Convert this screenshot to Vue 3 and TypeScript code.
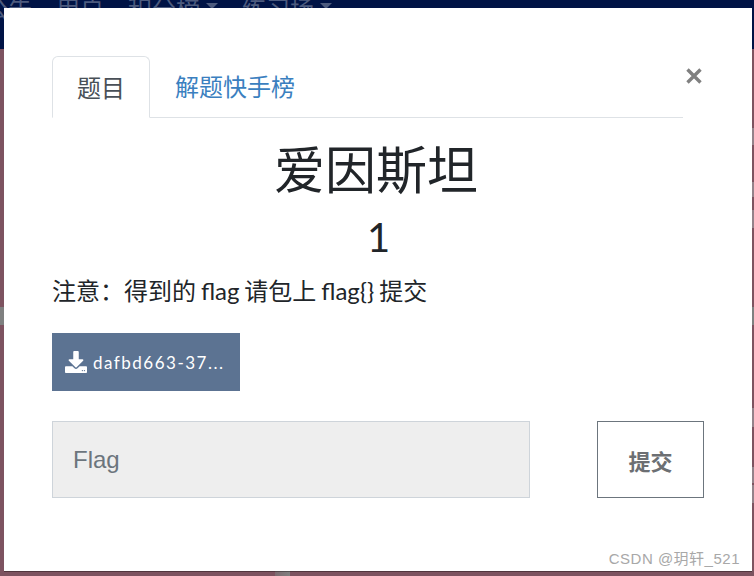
<script setup lang="ts">
const navItems = [
  { label: '公告', caret: false },
  { label: '用户', caret: false },
  { label: '积分榜', caret: true },
  { label: '练习场', caret: true },
]
</script>

<template>
  <div class="page">
    <div class="nav">
      <span v-for="item in navItems" :key="item.label" class="nav-item">
        {{ item.label }}<i v-if="item.caret" class="caret"></i>
      </span>
    </div>
    <div class="band"></div>
    <div class="strip"></div>
    <div class="patch"></div>
    <div class="modal">
      <div class="tab-row">
        <div class="tabs">
          <div class="tab active">题目</div>
          <div class="tab link">解题快手榜</div>
        </div>
        <svg class="close" viewBox="0 0 18 18" width="18" height="18" aria-label="关闭">
          <path d="M2.5 2.5 L15.5 15.5 M15.5 2.5 L2.5 15.5" stroke="#808080" stroke-width="3.4" fill="none" />
        </svg>
      </div>
      <h2 class="title">爱因斯坦</h2>
      <div class="points">1</div>
      <p class="note">注意：得到的 flag 请包上 flag{} 提交</p>
      <button class="file">
        <svg viewBox="0 0 512 512" width="22" height="22" class="dl">
          <path fill="#fff" d="M216 0h80c13 0 24 11 24 24v168h88c18 0 27 22 14 34L270 378c-7 8-21 8-28 0L90 226c-13-12-4-34 14-34h88V24c0-13 11-24 24-24z" />
          <path fill="#fff" d="M512 376v112c0 13-11 24-24 24H24c-13 0-24-11-24-24V376c0-13 11-24 24-24h147l49 49c20 20 52 20 72 0l49-49h147c13 0 24 11 24 24z" />
          <circle cx="404" cy="456" r="16" fill="#5c7392" /><circle cx="452" cy="456" r="16" fill="#5c7392" />
        </svg>
        <span class="file-name">dafbd663-37...</span>
      </button>
      <div class="submit-row">
        <input class="flag" placeholder="Flag" />
        <button class="submit">提交</button>
      </div>
      <div class="mark">CSDN @玥轩_521</div>
    </div>
  </div>
</template>

<style>
html, body { margin: 0; padding: 0; }
</style>

<style scoped>
.page {
  position: relative;
  width: 754px;
  height: 576px;
  overflow: hidden;
  background: #7d5360;
  font-family: Lato, "Noto Sans CJK SC", sans-serif;
}
.nav {
  height: 49px;
  background: #001345;
  display: flex;
  align-items: flex-start;
  gap: 24px;
  box-sizing: border-box;
  overflow: hidden;
}
.nav-item {
  display: flex;
  flex: none;
  color: #4d5b7e;
  font-size: 24px;
  line-height: 24px;
  margin-top: -4px;
  font-family: "Noto Sans CJK SC", sans-serif;
}
.nav-item:first-child { margin-left: -16px; }
.caret {
  width: 0;
  height: 0;
  margin: 7px 0 0 6px;
  border-left: 6.5px solid transparent;
  border-right: 6.5px solid transparent;
  border-top: 6.5px solid #4d5b7e;
}
.band {
  position: absolute;
  left: 0;
  right: 0;
  top: 307px;
  height: 18px;
  background: #7f8080;
}
.strip {
  position: absolute;
  right: 0;
  top: 0;
  width: 2px;
  height: 576px;
  background:
    linear-gradient(#94828a, #94828a) 0 128px / 100% 17px no-repeat,
    linear-gradient(#94828a, #94828a) 0 182px / 100% 15px no-repeat,
    linear-gradient(#94828a, #94828a) 0 210px / 100% 18px no-repeat,
    linear-gradient(#94828a, #94828a) 0 408px / 100% 19px no-repeat,
    linear-gradient(#94828a, #94828a) 0 467px / 100% 16px no-repeat,
    linear-gradient(#94828a, #94828a) 0 485px / 100% 18px no-repeat;
}
.patch {
  position: absolute;
  left: 275px;
  bottom: 0;
  width: 15px;
  height: 6px;
  background: linear-gradient(90deg, #7d6a70, #808080);
}
.modal {
  position: absolute;
  left: 4px;
  top: 8px;
  width: 748px;
  height: 563px;
  background: #fff;
  box-sizing: border-box;
  padding: 48px 48px 0;
  box-shadow: 0 1px 0 rgba(0,0,0,.35);
}
.tab-row { position: relative; }
.tabs {
  display: flex;
  width: 631px;
  height: 62px;
  box-sizing: border-box;
  border-bottom: 1px solid #dee2e6;
}
.tab {
  height: 62px;
  box-sizing: border-box;
  font-size: 24px;
  line-height: 60px;
  font-family: "Noto Sans CJK SC", sans-serif;
  padding: 0 24px;
}
.tab.active {
  color: #495057;
  background: #fff;
  border: 1px solid #dee2e6;
  border-bottom-color: #fff;
  border-radius: 6px 6px 0 0;
}
.tab.link { padding-left: 25px; color: #3b7fbf; }
.close { position: absolute; left: 633px; top: 11px; }
.title {
  margin: 20px 0 0;
  padding-right: 4px;
  text-align: center;
  font-size: 51px;
  line-height: 58px;
  font-weight: 400;
  color: #212529;
  font-family: "Noto Sans CJK SC", sans-serif;
}
.points {
  text-align: center;
  font-size: 40px;
  line-height: 48px;
  margin-top: 17px;
  padding-left: 1px;
  color: #212529;
}
.note {
  margin: 12px 0 0;
  font-size: 24px;
  line-height: 36px;
  word-spacing: -1.25px;
  color: #212529;
  font-family: Lato, "Noto Sans CJK SC", sans-serif;
}
.file {
  display: flex;
  align-items: center;
  gap: 6px;
  width: 188px;
  height: 58px;
  margin-top: 24px;
  padding: 0 0 0 13px;
  border: 0;
  background: #5c7392;
  color: #fff;
  font: 17px Lato, sans-serif;
  letter-spacing: 1.5px;
  white-space: nowrap;
}
.dl { flex: none; }
.submit-row {
  display: flex;
  justify-content: space-between;
  margin-top: 30px;
}
.flag {
  width: 478px;
  height: 77px;
  box-sizing: border-box;
  border: 1px solid #ced4da;
  background: #eee;
  padding: 0 20px;
  font: 24px "Liberation Sans", sans-serif;
  outline: none;
}
.flag::placeholder { color: #6c757d; opacity: 1; }
.submit {
  width: 107px;
  height: 77px;
  box-sizing: border-box;
  border: 1px solid #6c757d;
  background: #fff;
  color: #6c6f73;
  font: 700 22px "Noto Sans CJK SC", sans-serif;
}
.mark {
  position: absolute;
  right: 12px;
  bottom: 3px;
  color: #a8a8a8;
  font: 15px "Liberation Sans", "Noto Sans CJK SC", sans-serif;
  letter-spacing: 0.5px;
}
</style>
